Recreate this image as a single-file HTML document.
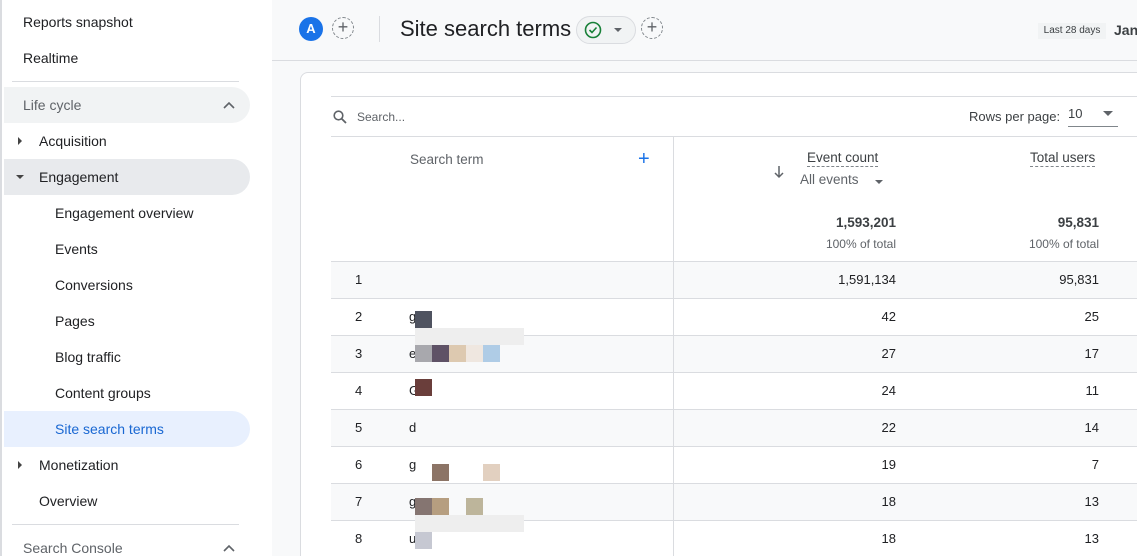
<!DOCTYPE html>
<html style="width:1137px;height:556px;overflow:hidden"><head><style>
*{margin:0;padding:0;box-sizing:border-box}
body{width:1137px;height:556px;overflow:hidden;background:#f8f9fa;font-family:"Liberation Sans",Arial,sans-serif;color:#202124;position:relative}
.sb{position:absolute;left:0;top:0;width:272px;height:556px;background:#fff;border-left:2px solid #dadce0}
.it{position:absolute;font-size:14px;height:36px;line-height:36px}
.pill{position:absolute;left:2px;width:246px;height:36px;border-radius:0 18px 18px 0}
.hr{position:absolute;left:10px;width:227px;border-top:1px solid #dadce0}
.tri{position:absolute;left:16px;width:0;height:0}
.a{position:absolute}
.card{position:absolute;left:300px;top:72px;width:850px;height:500px;background:#fff;border:1px solid #dadce0;border-radius:8px}
.row{position:absolute;left:331px;width:806px;height:37px;border-top:1px solid #dadce0;font-size:13px;line-height:36px}
.row span{position:absolute}
.n{left:24px}.t{left:78px}.e{right:241px}.u{right:38px}
.g{background:#f8f9fa}
.sq{position:absolute;width:17px;height:17px}
</style></head><body>
<div class="sb">
 <div class="it" style="left:21px;top:4px">Reports snapshot</div>
 <div class="it" style="left:21px;top:40px">Realtime</div>
 <div class="hr" style="top:81px"></div>
 <div class="pill" style="top:87px;background:#f1f3f4"></div>
 <div class="it" style="left:21px;top:87px;color:#5f6368">Life cycle</div>
 <svg class="a" style="left:220px;top:99px" width="14" height="12"><path d="M2 9 L7 4 L12 9" fill="none" stroke="#5f6368" stroke-width="1.6"/></svg>
 <div class="tri" style="top:137px;border-top:4px solid transparent;border-bottom:4px solid transparent;border-left:4px solid #444"></div>
 <div class="it" style="left:37px;top:123px">Acquisition</div>
 <div class="pill" style="top:159px;background:#e8eaed"></div>
 <div class="tri" style="top:175px;left:14px;border-left:4px solid transparent;border-right:4px solid transparent;border-top:4px solid #444"></div>
 <div class="it" style="left:37px;top:159px">Engagement</div>
 <div class="it" style="left:53px;top:195px">Engagement overview</div>
 <div class="it" style="left:53px;top:231px">Events</div>
 <div class="it" style="left:53px;top:267px">Conversions</div>
 <div class="it" style="left:53px;top:303px">Pages</div>
 <div class="it" style="left:53px;top:339px">Blog traffic</div>
 <div class="it" style="left:53px;top:375px">Content groups</div>
 <div class="pill" style="top:411px;background:#e8f0fe"></div>
 <div class="it" style="left:53px;top:411px;color:#1967d2">Site search terms</div>
 <div class="tri" style="top:461px;border-top:4px solid transparent;border-bottom:4px solid transparent;border-left:4px solid #444"></div>
 <div class="it" style="left:37px;top:447px">Monetization</div>
 <div class="it" style="left:37px;top:483px">Overview</div>
 <div class="hr" style="top:524px"></div>
 <div class="it" style="left:21px;top:530px;color:#5f6368">Search Console</div>
 <svg class="a" style="left:220px;top:542px" width="14" height="12"><path d="M2 9 L7 4 L12 9" fill="none" stroke="#5f6368" stroke-width="1.6"/></svg>
</div>
<div class="a" style="left:272px;top:60px;width:865px;border-top:1px solid #dadce0"></div>
<div class="a" style="left:299px;top:17px;width:24px;height:24px;border-radius:50%;background:#1a73e8;color:#fff;font-size:13px;font-weight:bold;text-align:center;line-height:24px">A</div>
<div class="a" style="left:332px;top:17px;width:22px;height:22px;border-radius:50%;border:1px dashed #80868b;text-align:center;line-height:19px;font-size:18px;color:#5f6368">+</div>
<div class="a" style="left:379px;top:16px;height:26px;border-left:1px solid #dadce0"></div>
<div class="a" style="left:400px;top:16px;font-size:22px;color:#202124">Site search terms</div>
<div class="a" style="left:576px;top:16px;width:60px;height:28px;border-radius:14px;border:1px solid #dadce0;background:#f1f3f4"></div>
<svg class="a" style="left:584px;top:21px" width="18" height="18"><circle cx="9" cy="9" r="7.5" fill="none" stroke="#188038" stroke-width="1.6"/><path d="M5.5 9 L8 11.5 L12.5 6.5" fill="none" stroke="#188038" stroke-width="1.6"/></svg>
<div class="a" style="left:614px;top:28px;border-left:4px solid transparent;border-right:4px solid transparent;border-top:4px solid #5f6368"></div>
<div class="a" style="left:641px;top:17px;width:22px;height:22px;border-radius:50%;border:1px dashed #80868b;text-align:center;line-height:19px;font-size:18px;color:#5f6368">+</div>
<div class="a" style="left:1038px;top:23px;width:68px;height:16px;background:#f1f3f4;font-size:10px;line-height:16px;text-align:center;color:#3c4043">Last 28 days</div>
<div class="a" style="left:1114px;top:22px;font-size:14px;font-weight:bold;color:#3c4043">Jan</div>
<div class="card"></div>
<div class="a" style="left:331px;top:96px;width:806px;border-top:1px solid #dadce0"></div>
<svg class="a" style="left:333px;top:110px" width="14" height="14"><circle cx="5.5" cy="5.5" r="4.3" fill="none" stroke="#5f6368" stroke-width="1.6"/><path d="M8.7 8.7 L13 13" stroke="#5f6368" stroke-width="1.8"/></svg>
<div class="a" style="left:357px;top:110px;font-size:12px;color:#5f6368">Search...</div>
<div class="a" style="left:969px;top:109px;font-size:13px;color:#3c4043">Rows per page:</div>
<div class="a" style="left:1068px;top:106px;font-size:13px;color:#3c4043;width:50px;height:21px;border-bottom:1px solid #80868b">10</div>
<div class="a" style="left:1103px;top:111px;border-left:5px solid transparent;border-right:5px solid transparent;border-top:5px solid #5f6368"></div>
<div class="a" style="left:331px;top:136px;width:806px;border-top:1px solid #dadce0"></div>
<div class="a" style="left:673px;top:136px;height:420px;border-left:1px solid #dadce0;z-index:2"></div>
<div class="a" style="left:410px;top:152px;font-size:13.5px;color:#5f6368">Search term</div>
<div class="a" style="left:638px;top:148px;font-size:20px;color:#1a73e8">+</div>
<svg class="a" style="left:773px;top:165px" width="12" height="14"><path d="M6 1 V12 M2 8 L6 12 L10 8" fill="none" stroke="#5f6368" stroke-width="1.5"/></svg>
<div class="a" style="left:807px;top:150px;font-size:13.5px;color:#3c4043;border-bottom:1px dashed #80868b;line-height:16px">Event count</div>
<div class="a" style="left:800px;top:172px;font-size:13.5px;color:#5f6368">All events</div>
<div class="a" style="left:875px;top:180px;border-left:4px solid transparent;border-right:4px solid transparent;border-top:4px solid #5f6368"></div>
<div class="a" style="left:1030px;top:150px;font-size:13.5px;color:#3c4043;border-bottom:1px dashed #80868b;line-height:16px">Total users</div>
<div class="a" style="right:241px;top:215px;font-size:13.5px;font-weight:bold;color:#3c4043">1,593,201</div>
<div class="a" style="right:241px;top:237px;font-size:12px;color:#5f6368">100% of total</div>
<div class="a" style="right:38px;top:215px;font-size:13.5px;font-weight:bold;color:#3c4043">95,831</div>
<div class="a" style="right:38px;top:237px;font-size:12px;color:#5f6368">100% of total</div>
<div class="row g" style="top:261px"><span class="n">1</span><span class="e">1,591,134</span><span class="u">95,831</span></div>
<div class="row" style="top:298px"><span class="n">2</span><span class="t">g</span><span class="e">42</span><span class="u">25</span></div>
<div class="row g" style="top:335px"><span class="n">3</span><span class="t">e</span><span class="e">27</span><span class="u">17</span></div>
<div class="row" style="top:372px"><span class="n">4</span><span class="t">G</span><span class="e">24</span><span class="u">11</span></div>
<div class="row g" style="top:409px"><span class="n">5</span><span class="t">d</span><span class="e">22</span><span class="u">14</span></div>
<div class="row" style="top:446px"><span class="n">6</span><span class="t">g</span><span class="e">19</span><span class="u">7</span></div>
<div class="row g" style="top:483px"><span class="n">7</span><span class="t">g</span><span class="e">18</span><span class="u">13</span></div>
<div class="row" style="top:520px"><span class="n">8</span><span class="t">u</span><span class="e">18</span><span class="u">13</span></div>
<div class="a" style="left:415px;top:328px;width:109px;height:17px;background:#eeeeee"></div>
<div class="a" style="left:415px;top:515px;width:109px;height:17px;background:#eeeeee"></div>
<div class="sq" style="left:415px;top:311px;background:#4f5360"></div>
<div class="sq" style="left:415px;top:345px;background:#a8a8ad"></div>
<div class="sq" style="left:432px;top:345px;background:#5f5266"></div>
<div class="sq" style="left:449px;top:345px;background:#ddc9b0"></div>
<div class="sq" style="left:466px;top:345px;background:#efe7e0"></div>
<div class="sq" style="left:483px;top:345px;background:#afcce6"></div>
<div class="sq" style="left:415px;top:379px;background:#6a3e3b"></div>
<div class="sq" style="left:432px;top:464px;background:#8c7466"></div>
<div class="sq" style="left:483px;top:464px;background:#e2d0c0"></div>
<div class="sq" style="left:415px;top:498px;background:#857571"></div>
<div class="sq" style="left:432px;top:498px;background:#b69e80"></div>
<div class="sq" style="left:466px;top:498px;background:#bdb59b"></div>
<div class="sq" style="left:415px;top:532px;background:#c6c8d2"></div>
</body></html>
